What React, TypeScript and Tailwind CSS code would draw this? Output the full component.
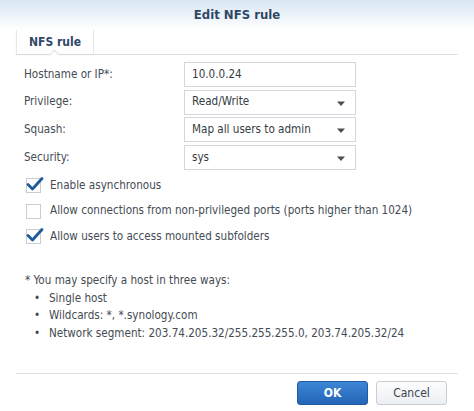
import React from "react";

const font = { fontFamily: '"DejaVu Sans Condensed", "Liberation Sans", sans-serif' };

function Caret() {
  return (
    <svg width="10" height="6" viewBox="0 0 10 6" className="absolute right-[9px] top-[10px]">
      <path d="M1 0.5 L9 0.5 L5 5 Z" fill="#4a4f55" />
    </svg>
  );
}

function Field({ label, value, select }: { label: string; value: string; select?: boolean }) {
  return (
    <div className="flex items-center h-[25px]">
      <div className="w-[168px] pl-[8px] text-[11.6px] text-[#444b54]">{label}</div>
      <div className="relative w-[172px] h-[25px] border border-[#d3d7dc] bg-white flex items-center pl-[7px] text-[11.6px] text-[#353c44]">
        {value}
        {select && <Caret />}
      </div>
    </div>
  );
}

function Check({ checked, label }: { checked: boolean; label: string }) {
  return (
    <div className="flex items-center h-[15px] pl-[10px]">
      <div className="relative w-[15px] h-[15px] border border-[#c9cdd2] bg-white">
        {checked && (
          <svg width="18" height="16" viewBox="0 0 18 16" className="absolute left-[-1px] top-[-3px]">
            <path d="M2 8.5 L6.5 13 L16 2.5" fill="none" stroke="#1f5b9c" strokeWidth="2.8" strokeLinecap="round" strokeLinejoin="round" />
          </svg>
        )}
      </div>
      <div className="ml-[9px] text-[11.6px] text-[#444b54]">{label}</div>
    </div>
  );
}

export default function App() {
  return (
    <div className="w-[474px] h-[411px] bg-white overflow-hidden flex flex-col" style={font}>
      <div className="h-[30px] bg-gradient-to-b from-[#d9e6f3] to-white flex items-center justify-center shrink-0">
        <span className="text-[13px] font-bold text-[#2e4866]">Edit NFS rule</span>
      </div>
      <div className="px-[16px] flex flex-col flex-1">
        <div className="relative h-[25px] border-b border-[#dde1e6] flex">
          <div className="w-[78px] h-full border-l border-r border-[#e4e7eb] flex items-center justify-center text-[12px] font-bold text-[#2e4866] shadow-[0_1px_2px_rgba(0,0,0,0.05)]">
            NFS rule
          </div>
          <div className="absolute left-[35px] bottom-[-4px] w-[7px] h-[7px] rotate-45 bg-white border-l border-t border-[#dde1e6]" />
        </div>
        <div className="mt-[7px] flex flex-col gap-[2.7px]">
          <Field label="Hostname or IP*:" value="10.0.0.24" />
          <Field label="Privilege:" value="Read/Write" select />
          <Field label="Squash:" value="Map all users to admin" select />
          <Field label="Security:" value="sys" select />
        </div>
        <div className="mt-[8px] flex flex-col gap-[10.5px]">
          <Check checked label="Enable asynchronous" />
          <Check checked={false} label="Allow connections from non-privileged ports (ports higher than 1024)" />
          <Check checked label="Allow users to access mounted subfolders" />
        </div>
        <div className="mt-[28px] pl-[9px] text-[11.6px] text-[#444b54] leading-[17.5px]">
          <div>* You may specify a host in three ways:</div>
          <ul className="pl-[9px]">
            <li className="flex"><span className="w-[15px]">•</span>Single host</li>
            <li className="flex"><span className="w-[15px]">•</span>Wildcards: *, *.synology.com</li>
            <li className="flex"><span className="w-[15px]">•</span>Network segment: 203.74.205.32/255.255.255.0, 203.74.205.32/24</li>
          </ul>
        </div>
        <div className="flex-1" />
        <div className="border-t border-[#dde1e6] h-[38px] flex items-start justify-end pt-[7px] pr-[11px] gap-[8px] shrink-0">
          <button className="w-[71px] h-[24px] rounded-[3px] border border-[#1f5ba6] bg-gradient-to-b from-[#3d86d6] to-[#2465b6] text-white text-[12px] font-bold">
            OK
          </button>
          <button className="w-[71px] h-[24px] rounded-[3px] border border-[#c8cdd3] bg-gradient-to-b from-[#fdfdfe] to-[#eceff3] text-[#3a4350] text-[12px]">
            Cancel
          </button>
        </div>
      </div>
    </div>
  );
}
